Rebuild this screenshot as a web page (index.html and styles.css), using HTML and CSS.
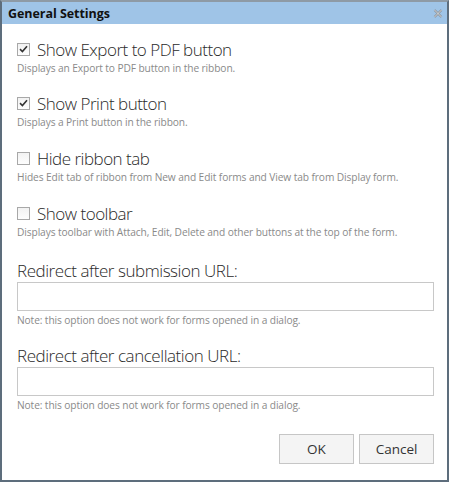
FILE: index.html
```html
<!DOCTYPE html>
<html>
<head>
<meta charset="utf-8">
<link rel="stylesheet" href="styles.css">
</head>
<body>
<div class="dialog">
  <div class="titlebar">
    <span class="title">General Settings</span>
    <svg class="close" width="10" height="9" viewBox="0 0 10 9"><path d="M1.5 1 L8.5 8 M8.5 1 L1.5 8" stroke="#8a8f95" stroke-width="2.2"/><path d="M1.5 1 L8.5 8 M8.5 1 L1.5 8" stroke="#e3e8ee" stroke-width="0.8"/></svg>
  </div>
  <div class="content">
    <div class="option first">
      <label class="opt-label"><span class="cb checked"><svg width="9" height="8" viewBox="0 0 9 8"><path d="M1 4.2 L3.4 6.5 L8 1.2" fill="none" stroke="#333" stroke-width="1.6"/></svg></span>Show Export to PDF button</label>
      <div class="desc">Displays an Export to PDF button in the ribbon.</div>
    </div>
    <div class="option">
      <label class="opt-label"><span class="cb checked"><svg width="9" height="8" viewBox="0 0 9 8"><path d="M1 4.2 L3.4 6.5 L8 1.2" fill="none" stroke="#333" stroke-width="1.6"/></svg></span>Show Print button</label>
      <div class="desc">Displays a Print button in the ribbon.</div>
    </div>
    <div class="option">
      <label class="opt-label"><span class="cb"></span>Hide ribbon tab</label>
      <div class="desc">Hides Edit tab of ribbon from New and Edit forms and View tab from Display form.</div>
    </div>
    <div class="option">
      <label class="opt-label"><span class="cb"></span>Show toolbar</label>
      <div class="desc">Displays toolbar with Attach, Edit, Delete and other buttons at the top of the form.</div>
    </div>
    <div class="field first-field">
      <div class="field-label">Redirect after submission URL:</div>
      <div class="input"></div>
      <div class="desc">Note: this option does not work for forms opened in a dialog.</div>
    </div>
    <div class="field">
      <div class="field-label">Redirect after cancellation URL:</div>
      <div class="input"></div>
      <div class="desc">Note: this option does not work for forms opened in a dialog.</div>
    </div>
    <div class="buttons">
      <div class="btn">OK</div>
      <div class="btn">Cancel</div>
    </div>
  </div>
</div>
</body>
</html>
```
FILE: styles.css
```css
html, body {
  margin: 0;
  padding: 0;
  background: #ffffff;
}
body {
  font-family: "Open Sans", "Noto Sans", sans-serif;
  color: #444;
}
.dialog {
  width: 449px;
  height: 482px;
  box-sizing: border-box;
  border: 2px solid #5d6d7c;
  border-top-color: #8e9aa5;
  background: #fff;
  display: flex;
  flex-direction: column;
}
.titlebar {
  height: 22px;
  background: #9fc4e7;
  display: flex;
  align-items: center;
  justify-content: space-between;
  padding: 0 4px 0 6px;
}
.title {
  font-family: "Open Sans", sans-serif;
  font-weight: 700;
  font-size: 12.5px;
  color: #111;
  letter-spacing: -0.05px;
}
.content {
  padding: 0 13px 0 15px;
  display: flex;
  flex-direction: column;
}
.option {
  margin-top: 16px;
}
.option.first {
  margin-top: 13px;
}
.option + .option + .option {
  margin-top: 17px;
}
.opt-label {
  display: flex;
  align-items: center;
  height: 24px;
  font-size: 17px;
  font-weight: 350;
  color: #2a2a2a;
  letter-spacing: -0.5px;
}
.cb {
  width: 11px;
  height: 11px;
  border: 1px solid #a8a8a8;
  background: linear-gradient(#f2f2f2, #fdfdfd);
  margin-right: 7px;
  display: flex;
  align-items: center;
  justify-content: center;
}
.desc {
  font-size: 10.2px;
  line-height: 14px;
  color: #8a8a8a;
  letter-spacing: -0.1px;
}
.field {
  margin-top: 18px;
}
.field.first-field {
  margin-top: 21px;
}
.field-label {
  font-size: 17px;
  font-weight: 350;
  line-height: 22px;
  color: #2a2a2a;
  letter-spacing: -0.45px;
}
.input {
  height: 27px;
  border: 1px solid #c8c8c8;
  margin-bottom: 2px;
}
.buttons {
  display: flex;
  justify-content: flex-end;
  gap: 5px;
  margin-top: 22px;
}
.btn {
  width: 73px;
  height: 28px;
  border: 1px solid #c6c6c6;
  background: #f4f4f4;
  display: flex;
  align-items: center;
  justify-content: center;
  font-size: 13.5px;
  color: #333;
}
```
